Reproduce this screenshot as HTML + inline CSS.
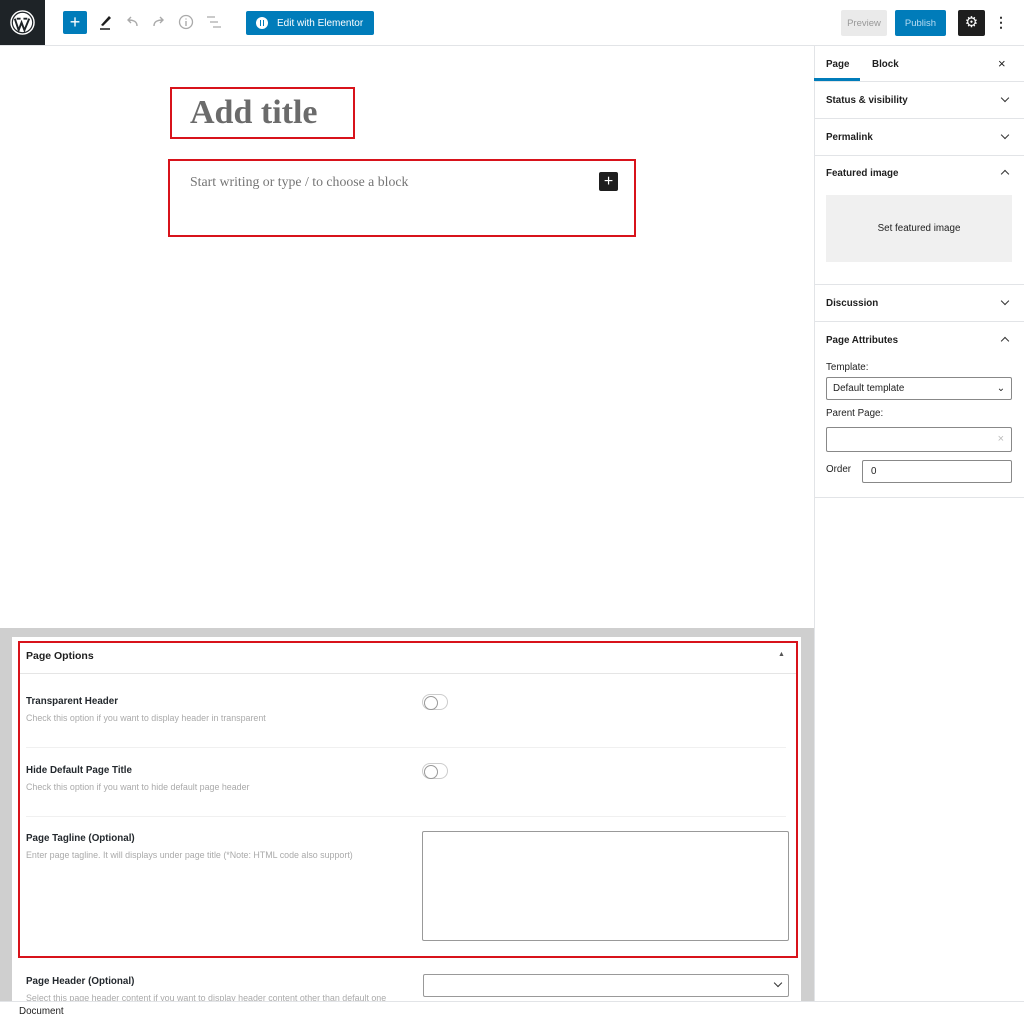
<!DOCTYPE html>
<html><head><meta charset="utf-8"><style>
*{box-sizing:border-box;margin:0;padding:0}
body{width:1024px;height:1020px;position:relative;background:#fff;font-family:"Liberation Sans",sans-serif;color:#1e1e1e;overflow:hidden}
.a{position:absolute}
.t{font-size:10.5px;font-weight:bold;color:#1e1e1e}
.row{position:absolute;left:814px;width:210px;border-bottom:1px solid #e2e4e7;height:37px}
.row span{position:absolute;left:12px;top:13px;font-size:9.8px;font-weight:bold}
.chev{position:absolute;right:16px;top:13px;width:6px;height:6px;border-right:1.5px solid #333;border-bottom:1.5px solid #333;transform:rotate(45deg)}
.chev.up{transform:rotate(-135deg);top:16px}
.lbl{font-size:9.8px;font-weight:bold;color:#23282d}
.desc{font-size:8.9px;color:#aaa}
.tog{position:absolute;width:26px;height:16px;border:1px solid #ccc;border-radius:8px}
.tog::after{content:"";position:absolute;left:1px;top:1px;width:12px;height:12px;border-radius:50%;border:1px solid #999;background:#fff}
</style></head><body>
<div class="a" style="left:0;top:0;width:1024px;height:46px;border-bottom:1px solid #e2e4e7"></div>
<div class="a" style="left:0;top:0;width:45px;height:45px;background:#1e2327"></div>
<svg class="a" style="left:10px;top:10px" width="25" height="25" viewBox="0 0 26 26"><circle cx="13" cy="13" r="12" fill="none" stroke="#fff" stroke-width="1.5"/><circle cx="13" cy="13" r="10" fill="#fff"/><path d="M5 9 L9 21 L12 13 L15 21 L20 9 M7 9h4 M14 9h4" stroke="#1e2327" stroke-width="2" fill="none"/></svg>
<div class="a" style="left:63px;top:11px;width:24px;height:23px;background:#007cba;border-radius:2px;color:#fff;font-size:18px;text-align:center;line-height:22px">+</div>
<svg class="a" style="left:98px;top:13px" width="16" height="18"><path d="M3 12 L11 3 L13 5 L5 13 Z" fill="#1e1e1e"/><path d="M2 16h10" stroke="#1e1e1e" stroke-width="1.5"/></svg>
<svg class="a" style="left:125px;top:15px" width="16" height="14"><path d="M12 11 C12 6 8 5 3 5 M6 2 L3 5 L6 8" stroke="#aaa" stroke-width="1.4" fill="none"/></svg>
<svg class="a" style="left:151px;top:15px" width="16" height="14"><path d="M3 11 C3 6 7 5 12 5 M9 2 L12 5 L9 8" stroke="#aaa" stroke-width="1.4" fill="none"/></svg>
<svg class="a" style="left:178px;top:14px" width="16" height="16"><circle cx="8" cy="8" r="6.5" fill="none" stroke="#aaa" stroke-width="1.3"/><path d="M8 7v5M8 4.5v1" stroke="#aaa" stroke-width="1.4"/></svg>
<svg class="a" style="left:205px;top:15px" width="18" height="14"><path d="M2 2h8M5 7h8M8 12h8" stroke="#aaa" stroke-width="1.3"/></svg>
<div class="a" style="left:246px;top:11px;width:128px;height:24px;background:#007cba;border-radius:2px;color:#fff;font-size:10px;line-height:25px;padding-left:31px">Edit with Elementor</div>
<div class="a" style="left:256px;top:17px;width:12px;height:12px;border-radius:50%;background:#fff"></div>
<div class="a" style="left:260px;top:20px;width:4px;height:6px;border-left:1.5px solid #007cba;border-right:1.5px solid #007cba"></div>
<div class="a" style="left:841px;top:10px;width:46px;height:26px;background:#eaeaea;color:#999;font-size:9.5px;text-align:center;line-height:27px;border-radius:2px">Preview</div>
<div class="a" style="left:895px;top:10px;width:51px;height:26px;background:#007cba;color:#b8dcf2;font-size:9.5px;text-align:center;line-height:27px;border-radius:2px">Publish</div>
<div class="a" style="left:958px;top:10px;width:27px;height:26px;background:#1e1e1e;border-radius:2px;color:#fff;font-size:15px;text-align:center;line-height:26px">⚙</div>
<div class="a" style="left:994px;top:12px;font-size:14px;font-weight:bold;color:#333;line-height:20px">⋮</div>
<div class="a" style="left:814px;top:46px;width:1px;height:955px;background:#e2e4e7"></div>
<div class="a" style="left:814px;top:46px;width:210px;height:36px;border-bottom:1px solid #e2e4e7"></div>
<div class="a" style="left:826px;top:59px;font-size:9.8px;font-weight:bold">Page</div>
<div class="a" style="left:872px;top:59px;font-size:9.8px;font-weight:bold">Block</div>
<div class="a" style="left:814px;top:78px;width:46px;height:3px;background:#007cba"></div>
<div class="a" style="left:998px;top:56px;font-size:13px">×</div>
<div class="row" style="top:82px"><span>Status &amp; visibility</span><i class="chev"></i></div>
<div class="row" style="top:119px"><span>Permalink</span><i class="chev"></i></div>
<div class="row" style="top:155px;height:130px"><span>Featured image</span><i class="chev up"></i>
<div class="a" style="left:12px;top:40px;width:186px;height:67px;background:#f0f0f0;font-size:9.8px;text-align:center;line-height:67px">Set featured image</div></div>
<div class="row" style="top:285px"><span>Discussion</span><i class="chev"></i></div>
<div class="row" style="top:322px;height:176px"><span>Page Attributes</span><i class="chev up"></i>
<div class="a" style="left:12px;top:40px;font-size:9.8px">Template:</div>
<div class="a" style="left:12px;top:55px;width:186px;height:23px;border:1px solid #888;border-radius:2px;font-size:9.8px;line-height:22px;padding-left:6px">Default template<span style="position:absolute;left:auto;right:6px;top:0;font-weight:normal">⌄</span></div>
<div class="a" style="left:12px;top:86px;font-size:9.8px">Parent Page:</div>
<div class="a" style="left:12px;top:105px;width:186px;height:25px;border:1px solid #888;border-radius:2px"><span style="left:auto;right:7px;top:5px;font-weight:normal;color:#bbb;font-size:11px">×</span></div>
<div class="a" style="left:12px;top:142px;font-size:9.8px">Order</div>
<div class="a" style="left:48px;top:138px;width:150px;height:23px;border:1px solid #888;border-radius:2px;font-size:9.8px;line-height:22px;padding-left:8px">0</div>
</div>
<div class="a" style="left:170px;top:87px;width:185px;height:52px;border:2.5px solid #d8131b"></div>
<div class="a" style="left:190px;top:94px;font-family:'Liberation Serif',serif;font-size:34px;font-weight:bold;color:#6b6b6b">Add title</div>
<div class="a" style="left:168px;top:159px;width:468px;height:78px;border:2.5px solid #d8131b"></div>
<div class="a" style="left:190px;top:174px;font-family:'Liberation Serif',serif;font-size:13.8px;color:#757575">Start writing or type / to choose a block</div>
<div class="a" style="left:599px;top:172px;width:19px;height:19px;background:#1e1e1e;border-radius:2px;color:#fff;font-size:16px;text-align:center;line-height:19px">+</div>
<div class="a" style="left:0;top:628px;width:814px;height:373px;background:#cfcfcf"></div>
<div class="a" style="left:12px;top:637px;width:789px;height:364px;background:#fff"></div>
<div class="a" style="left:18px;top:641px;width:780px;height:317px;border:2.5px solid #d8131b"></div>
<div class="a" style="left:20px;top:673px;width:776px;height:1px;background:#e5e5e5"></div>
<div class="a t" style="left:26px;top:650px">Page Options</div>
<div class="a" style="left:778px;top:651px;font-size:7px;color:#555">▲</div>
<div class="a lbl" style="left:26px;top:696px">Transparent Header</div>
<div class="a desc" style="left:26px;top:713px">Check this option if you want to display header in transparent</div>
<div class="tog" style="left:422px;top:694px"></div>
<div class="a" style="left:26px;top:747px;width:760px;height:1px;background:#f0f0f0"></div>
<div class="a lbl" style="left:26px;top:765px">Hide Default Page Title</div>
<div class="a desc" style="left:26px;top:782px">Check this option if you want to hide default page header</div>
<div class="tog" style="left:422px;top:763px"></div>
<div class="a" style="left:26px;top:816px;width:760px;height:1px;background:#f0f0f0"></div>
<div class="a lbl" style="left:26px;top:833px">Page Tagline (Optional)</div>
<div class="a desc" style="left:26px;top:850px">Enter page tagline. It will displays under page title (*Note: HTML code also support)</div>
<div class="a" style="left:422px;top:831px;width:367px;height:110px;border:1px solid #999;border-radius:2px"></div>
<div class="a lbl" style="left:26px;top:976px">Page Header (Optional)</div>
<div class="a desc" style="left:26px;top:993px">Select this page header content if you want to display header content other than default one</div>
<div class="a" style="left:423px;top:974px;width:366px;height:23px;border:1px solid #999;border-radius:2px"></div>
<div class="a" style="left:775px;top:980px;width:6px;height:6px;border-right:1.3px solid #333;border-bottom:1.3px solid #333;transform:rotate(45deg)"></div>
<div class="a" style="left:0;top:1001px;width:1024px;height:19px;background:#fff;border-top:1px solid #e2e4e7"></div>
<div class="a" style="left:19px;top:1006px;font-size:9.8px">Document</div>
</body></html>
